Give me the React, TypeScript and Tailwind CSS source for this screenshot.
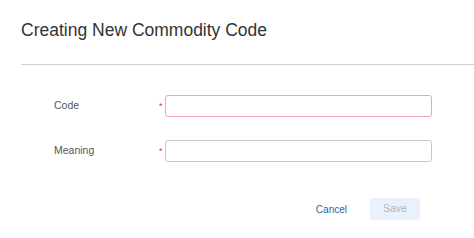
export default function App() {
  return (
    <div className="w-[474px] h-[238px] bg-white font-['Liberation_Sans',Arial,sans-serif] overflow-hidden">
      <div className="pl-[21px] pt-[19px] pb-[16px]">
        <h1 className="text-[17.5px] leading-[22px] text-[#333]">Creating New Commodity Code</h1>
      </div>
      <div className="ml-[21px] h-px bg-[#cfcfcf] mt-[7px]" />
      <div className="pt-[30px] flex flex-col gap-[23px]">
        <div className="flex items-center h-[22px]">
          <label className="shrink-0 w-[159px] pl-[54px] text-[10.5px] text-[#555]">Code</label>
          <span className="shrink-0 w-[6px] text-[9px] text-[#d33] leading-none">*</span>
          <input
            type="text"
            className="shrink-0 w-[267px] h-[22px] rounded-[3px] border border-[#f2a3ab] outline-none px-2 text-[11px]"
          />
        </div>
        <div className="flex items-center h-[22px]">
          <label className="shrink-0 w-[159px] pl-[54px] text-[10.5px] text-[#555]">Meaning</label>
          <span className="shrink-0 w-[6px] text-[9px] text-[#d33] leading-none">*</span>
          <input
            type="text"
            className="shrink-0 w-[267px] h-[22px] rounded-[3px] border border-[#c8c8c8] outline-none px-2 text-[11px]"
          />
        </div>
      </div>
      <div className="flex items-center justify-end pr-[54px] pt-[36px] gap-[23px]">
        <button type="button" className="text-[10px] text-[#2f5fae]">Cancel</button>
        <button
          type="button"
          disabled
          className="w-[50px] h-[22px] rounded-[3px] bg-[#e9f2fc] text-[10.5px] text-[#b0b4ba]"
        >
          Save
        </button>
      </div>
    </div>
  );
}
